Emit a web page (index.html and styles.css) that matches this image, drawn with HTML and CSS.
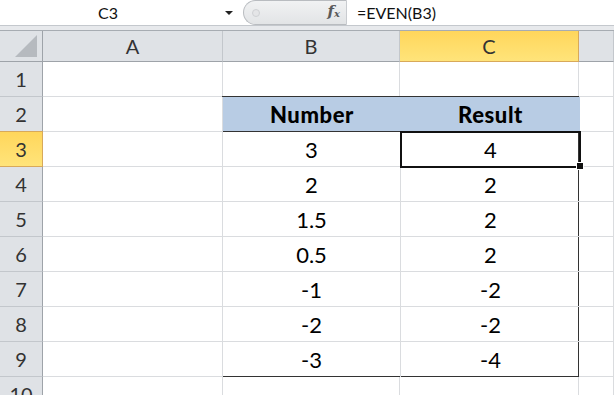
FILE: index.html
```html
<!DOCTYPE html>
<html lang="en">
<head>
    <meta charset="UTF-8">
    <title>EVEN function</title>
    <link rel="stylesheet" href="styles.css">
</head>
<body>

<!-- Formula bar -->
<div class="formula-bar">
    <div class="name-box">
        <span class="name">C3</span>
        <span class="arrow"></span>
    </div>
    <div class="fx-box">
        <span class="knob"></span>
        <span class="fx">f<sub>x</sub></span>
    </div>
    <div class="formula">=EVEN(B3)</div>
</div>
<div class="band"></div>

<!-- Sheet -->
<div class="sheet">
    <div class="hd corner"><span class="tri"></span></div>
    <div class="hd col">A</div>
    <div class="hd col">B</div>
    <div class="hd col active">C</div>
    <div class="hd col"></div>

    <div class="hd row">1</div>
    <div class="cell"></div>
    <div class="cell"></div>
    <div class="cell"></div>
    <div class="cell"></div>

    <div class="table">
        <div class="th">Number</div>
        <div class="th">Result</div>
        <div class="td">3</div><div class="td sel">4</div>
        <div class="td">2</div><div class="td">2</div>
        <div class="td">1.5</div><div class="td">2</div>
        <div class="td">0.5</div><div class="td">2</div>
        <div class="td">-1</div><div class="td">-2</div>
        <div class="td">-2</div><div class="td">-2</div>
        <div class="td last">-3</div><div class="td last">-4</div>
    </div>

    <div class="hd row">2</div><div class="cell"></div><div class="cell"></div>
    <div class="hd row active">3</div><div class="cell"></div><div class="cell"></div>
    <div class="hd row">4</div><div class="cell"></div><div class="cell"></div>
    <div class="hd row">5</div><div class="cell"></div><div class="cell"></div>
    <div class="hd row">6</div><div class="cell"></div><div class="cell"></div>
    <div class="hd row">7</div><div class="cell"></div><div class="cell"></div>
    <div class="hd row">8</div><div class="cell"></div><div class="cell"></div>
    <div class="hd row">9</div><div class="cell"></div><div class="cell"></div>

    <div class="hd row">10</div>
    <div class="cell"></div>
    <div class="cell"></div>
    <div class="cell"></div>
    <div class="cell"></div>
</div>

</body>
</html>
```

FILE: styles.css
```css
* {
    box-sizing: border-box;
}
body {
    margin: 0;
    font-family: 'Lato', 'Liberation Sans', sans-serif;
    background-color: #FFF;
    color: #000;
    overflow: hidden;
    height: 395px;
}

/* formula bar */
.formula-bar {
    display: flex;
    height: 25px;
    background-color: #FFF;
}
.name-box {
    width: 243px;
    display: flex;
    align-items: center;
    position: relative;
}
.name {
    flex: 1;
    text-align: center;
    font-size: 16px;
    color: #111;
    padding-right: 27px;
}
.arrow {
    position: absolute;
    left: 225px;
    top: 11px;
    border-left: 4px solid transparent;
    border-right: 4px solid transparent;
    border-top: 4px solid #222;
}
.fx-box {
    width: 104px;
    display: flex;
    align-items: center;
    justify-content: space-between;
    padding: 0 6px 0 8px;
    background: linear-gradient(#F1F2F3, #E2E4E6);
    border: 1px solid #B9BCC0;
    border-right: 1px solid #C9CCD0;
    border-radius: 13px 0 0 13px;
}
.knob {
    width: 8px;
    height: 8px;
    border-radius: 50%;
    background: #E4E5E7;
    border: 1px solid #CFD1D4;
}
.fx {
    font-family: 'DejaVu Serif', serif;
    font-style: italic;
    font-weight: bold;
    font-size: 15px;
    color: #5A5A5A;
    margin-top: -3px;
}
.fx sub {
    font-size: 10px;
    vertical-align: -1px;
}
.formula {
    flex: 1;
    padding-left: 10px;
    font-size: 16px;
    line-height: 25px;
    color: #111;
}
.band {
    height: 6px;
    background-color: #E7E9EC;
    border-top: 1px solid #C4C8CD;
    border-bottom: 1px solid #A7ACB2;
}

/* sheet */
.sheet {
    display: grid;
    grid-template-columns: 43px 180px 177px 179px 35px;
    grid-template-rows: 31px repeat(10, 35px);
}
.hd {
    background-color: #DFE2E6;
    color: #333;
    font-size: 20px;
    display: flex;
    align-items: center;
    justify-content: center;
}
.col {
    border-right: 1px solid #C3C7CC;
    border-bottom: 1px solid #9EA3A9;
}
.row {
    border-right: 1px solid #9EA3A9;
    border-bottom: 1px solid #C3C7CC;
}
.corner {
    border-right: 1px solid #9EA3A9;
    border-bottom: 1px solid #9EA3A9;
    position: relative;
}
.tri {
    position: absolute;
    right: 5px;
    bottom: 4px;
    border-left: 22px solid transparent;
    border-bottom: 22px solid #B6BABF;
}
.hd.active {
    background: linear-gradient(#FFD65B, #FFE47A);
    border-color: #D8A95A;
}
.row.active {
    border-bottom: 1px solid #D8A95A;
    border-top: 1px solid #D8A95A;
    margin-top: -1px;
}
.cell {
    border-right: 1px solid #DADCDF;
    border-bottom: 1px solid #DADCDF;
}

/* data table */
.table {
    grid-column: 3 / 5;
    grid-row: 3 / 11;
    margin: -1px 0 0 -1px;
    display: grid;
    grid-template-columns: 178px 179px;
    grid-template-rows: 35px repeat(7, 35px);
    border: 1px solid #333;
    background-color: #FFF;
}
.th {
    background-color: #B8CCE4;
    font-weight: 900;
    font-size: 22px;
    letter-spacing: 0.6px;
    border-bottom: 1px solid #333;
    display: flex;
    align-items: center;
    justify-content: center;
}
.td {
    font-size: 22px;
    border-right: 1px solid #DADCDF;
    border-bottom: 1px solid #DADCDF;
    display: flex;
    align-items: center;
    justify-content: center;
}
.td:nth-child(even) {
    border-right: none;
}
.td.last {
    border-bottom: none;
}
.td.sel {
    position: relative;
    outline: 2px solid #111;
    outline-offset: -1px;
}
.td.sel::after {
    content: "";
    position: absolute;
    right: -4px;
    bottom: -4px;
    width: 6px;
    height: 6px;
    background-color: #111;
    border: 1px solid #FFF;
}
```
